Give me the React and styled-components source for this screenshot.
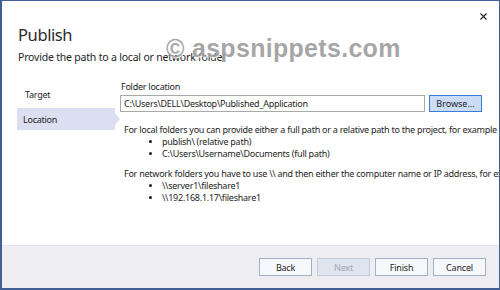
import styled, { createGlobalStyle } from "styled-components"

const Global = createGlobalStyle`
  html, body { margin: 0; padding: 0; background: #ffffff; }
  body { font-family: "Noto Sans", "Liberation Sans", sans-serif; color: #1e1e1e; }
  * { box-sizing: border-box; }
`

const Window = styled.div`
  position: relative;
  width: 500px;
  height: 290px;
  background: #ffffff;
  border: 1px solid #3f5f95;
  border-left-width: 2px;
  border-bottom-width: 2px;
  display: flex;
  flex-direction: column;
  overflow: hidden;
`

const Close = styled.button`
  position: absolute;
  top: 10px;
  right: 11px;
  width: 10px;
  height: 10px;
  padding: 0;
  border: none;
  background: none;
  display: flex;
  align-items: center;
  justify-content: center;
`

const Header = styled.header`
  padding: 23px 0 0 16px;
  display: flex;
  flex-direction: column;
  gap: 4px;
`

const Title = styled.h1`
  margin: 0;
  font-size: 16.5px;
  line-height: 22px;
  letter-spacing: -0.4px;
  font-weight: 400;
  color: #2b2b2b;
`

const Subtitle = styled.p`
  margin: 0;
  font-size: 10.5px;
  line-height: 15px;
  letter-spacing: -0.2px;
  color: #1e1e1e;
`

const Watermark = styled.div`
  position: absolute;
  left: 164px;
  top: 33px;
  font-family: "Liberation Sans", Arial, sans-serif;
  font-weight: 700;
  font-size: 25px;
  letter-spacing: 0.3px;
  color: rgba(150, 150, 150, 0.85);
  text-shadow: 1px 1px 0 rgba(255, 255, 255, 0.8);
  pointer-events: none;
`

const Body = styled.div`
  flex: 1;
  display: flex;
  padding-top: 15px;
  font-size: 9px;
  letter-spacing: -0.25px;
`

const Nav = styled.nav`
  flex-shrink: 0;
  width: 118px;
  padding: 3px 0 0 15px;
  display: flex;
  flex-direction: column;
  gap: 3px;
`

const NavItem = styled.div`
  position: relative;
  height: 22px;
  width: 98px;
  padding-left: ${p => (p.$active ? 6 : 8)}px;
  display: flex;
  align-items: center;
  background: ${p => (p.$active ? "#dcdff1" : "transparent")};
  &::after {
    content: "";
    display: ${p => (p.$active ? "block" : "none")};
    position: absolute;
    right: -5px;
    top: 5px;
    border-top: 6px solid transparent;
    border-bottom: 6px solid transparent;
    border-left: 5px solid #dcdff1;
  }
`

const Content = styled.section`
  flex: 1;
  min-width: 0;
  overflow: hidden;
  display: flex;
  flex-direction: column;
  white-space: nowrap;
`

const Label = styled.div`
  height: 15px;
  line-height: 14px;
  padding-left: 1px;
`

const Row = styled.div`
  display: flex;
  gap: 4px;
  padding-right: 17px;
`

const PathInput = styled.div`
  flex: 1;
  min-width: 0;
  height: 17px;
  border: 1px solid #a9a9a9;
  padding-left: 3px;
  display: flex;
  align-items: center;
`

const Browse = styled.button`
  flex-shrink: 0;
  width: 53px;
  height: 17px;
  padding: 0;
  font: inherit;
  color: #1e1e1e;
  background: #cbdcf7;
  border: 1px solid #3d7bd6;
`

const Para = styled.p`
  margin: ${p => p.$top}px 0 0 4px;
  line-height: 12px;
`

const List = styled.ul`
  margin: 0;
  padding-left: 42px;
  line-height: 12px;
  list-style: disc;
  li::marker { font-size: 8px; }
`

const Footer = styled.footer`
  height: 43px;
  background: #eeeef2;
  border-top: 1px solid #e4e4e8;
  display: flex;
  justify-content: flex-end;
  align-items: center;
  gap: 5px;
  padding: 0 13px 0 0;
`

const Btn = styled.button`
  width: 53px;
  height: 18px;
  padding: 0;
  font-family: inherit;
  font-size: 9px;
  letter-spacing: -0.2px;
  color: ${p => (p.disabled ? "#a0a7b4" : "#1e1e1e")};
  background: ${p => (p.disabled ? "#dfe5ee" : "#f6f8fc")};
  border: 1px solid ${p => (p.disabled ? "#c6ccd6" : "#a4b0c4")};
`

export default function App() {
  return (
    <>
      <Global />
      <Window>
        <Close aria-label="Close">
          <svg width="7" height="7" viewBox="0 0 7 7">
            <path d="M0.5 0.5 L6.5 6.5 M6.5 0.5 L0.5 6.5" stroke="#222" strokeWidth="1.1" />
          </svg>
        </Close>
        <Header>
          <Title>Publish</Title>
          <Subtitle>Provide the path to a local or network folder</Subtitle>
        </Header>
        <Body>
          <Nav>
            <NavItem>Target</NavItem>
            <NavItem $active>Location</NavItem>
          </Nav>
          <Content>
            <Label>Folder location</Label>
            <Row>
              <PathInput>C:\Users\DELL\Desktop\Published_Application</PathInput>
              <Browse>Browse...</Browse>
            </Row>
            <Para $top={12}>
              For local folders you can provide either a full path or a relative path to the project, for example
            </Para>
            <List>
              <li>publish\ (relative path)</li>
              <li>C:\Users\Username\Documents (full path)</li>
            </List>
            <Para $top={8}>
              For network folders you have to use \\ and then either the computer name or IP address, for example
            </Para>
            <List>
              <li>\\server1\fileshare1</li>
              <li>\\192.168.1.17\fileshare1</li>
            </List>
          </Content>
        </Body>
        <Footer>
          <Btn>Back</Btn>
          <Btn disabled>Next</Btn>
          <Btn>Finish</Btn>
          <Btn>Cancel</Btn>
        </Footer>
        <Watermark>© aspsnippets.com</Watermark>
      </Window>
    </>
  )
}
